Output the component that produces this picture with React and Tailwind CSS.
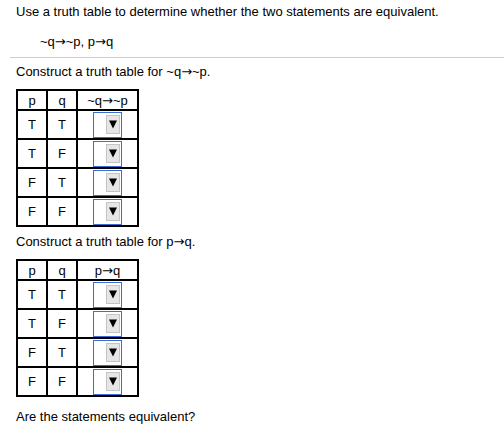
const rows = [
  ["T", "T"],
  ["T", "F"],
  ["F", "T"],
  ["F", "F"],
]

const Arrow = () => <span className="font-['DejaVu_Sans',sans-serif] text-[13px] leading-none">→</span>

const Dropdown = () => (
  <div className="w-[29px] h-[26px] border border-[#3a6ed6] bg-white flex items-center justify-end pr-[1px]">
    <div className="w-[14px] h-[19px] bg-[#e6e6e6] border border-[#c4c4c4] flex items-center justify-center">
      <svg width="8" height="9" viewBox="0 0 8 9">
        <polygon points="0,0.5 8,0.5 4,8.5" fill="#000" />
      </svg>
    </div>
  </div>
)

const TruthTable = ({ label }) => (
  <div className="ml-[16px] grid grid-cols-[30px_30px_61px] w-fit border-l-2 border-t-2 border-black">
    <div className="h-[20px] border-r-2 border-b-2 border-black flex items-center justify-center">p</div>
    <div className="h-[20px] border-r-2 border-b-2 border-black flex items-center justify-center">q</div>
    <div className="h-[20px] border-r-2 border-b-2 border-black flex items-center justify-center">{label}</div>
    {rows.map(([p, q], i) => (
      <div key={i} className="contents">
        <div className="h-[29px] border-r-2 border-b-2 border-black flex items-center justify-center">{p}</div>
        <div className="h-[29px] border-r-2 border-b-2 border-black flex items-center justify-center">{q}</div>
        <div className="h-[29px] border-r-2 border-b-2 border-black flex items-center justify-center">
          <Dropdown />
        </div>
      </div>
    ))}
  </div>
)

export default function App() {
  return (
    <div className="w-[504px] h-[445px] bg-white text-black text-[13px] leading-[15px] font-['Liberation_Sans',Arial,sans-serif] overflow-hidden">
      {/* Question */}
      <p className="pt-[4px] pl-[16px]">Use a truth table to determine whether the two statements are equivalent.</p>
      <p className="mt-[15px] h-[15px] pl-[40px]">~q<Arrow />~p, p<Arrow />q</p>
      <div className="mt-[8px] ml-[10px] h-px bg-[#cdcdd6]" />

      {/* First table */}
      <p className="mt-[6px] h-[15px] pl-[16px]">Construct a truth table for ~q<Arrow />~p.</p>
      <div className="mt-[10px]">
        <TruthTable label={<>~q<Arrow />~p</>} />
      </div>

      {/* Second table */}
      <p className="mt-[7px] h-[15px] pl-[16px]">Construct a truth table for p<Arrow />q.</p>
      <div className="mt-[10px]">
        <TruthTable label={<>p<Arrow />q</>} />
      </div>

      <p className="mt-[12px] pl-[16px]">Are the statements equivalent?</p>
    </div>
  )
}
